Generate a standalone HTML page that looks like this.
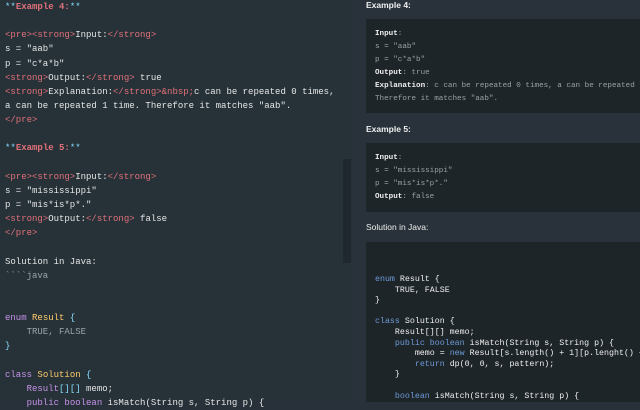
<!DOCTYPE html>
<html><head><meta charset="utf-8"><style>
*{margin:0;padding:0;box-sizing:border-box}
body{width:640px;height:400px;overflow:hidden;background:#283139;position:relative;font-family:"Liberation Mono",monospace}
#L{position:absolute;left:0;top:0;width:352px;height:400px;background:#263238;color:#e6e6e6;font-size:9px;line-height:14.15px;padding:0 0 0 5px;white-space:pre}
#L div{height:14.15px}
.t{color:#e2707a}.a{color:#80cbc4}.h{color:#e2707a;font-weight:bold}.s{color:#89ddff}.k{color:#c792ea}.c{color:#ffcb6b}.g{color:#9aa4ab}
#sb{position:absolute;left:343px;top:159px;width:8px;height:104px;background:#1f282e}
#R{position:absolute;left:352px;top:0;width:288px;height:400px;background:#29323a;color:#dde;font-family:"Liberation Sans",sans-serif}
.lab{position:absolute;left:14px;font-size:8.5px;font-weight:bold;color:#f0f0f0}
.blk{position:absolute;left:14px;right:0;background:#1e2529}
.pre{position:absolute;left:23px;font-size:7.6px;line-height:13px;white-space:pre;color:#9aa0a4;font-family:"Liberation Mono",monospace}
.pre b{color:#eee}
.jv{position:absolute;left:23px;font-size:8.3px;line-height:10.6px;white-space:pre;color:#eeeeee;font-family:"Liberation Mono",monospace}
.jk{color:#6c9ad6}
</style></head><body>
<div id="L"><div><span class="s">**</span><span class="h">Example 4:</span><span class="s">**</span></div><div></div><div><span class="t">&lt;pre&gt;&lt;strong&gt;</span>Input:<span class="t">&lt;/strong&gt;</span></div><div>s = "aab"</div><div>p = "c*a*b"</div><div><span class="t">&lt;strong&gt;</span>Output:<span class="t">&lt;/strong&gt;</span> true</div><div><span class="t">&lt;strong&gt;</span>Explanation:<span class="t">&lt;/strong&gt;&amp;nbsp;</span>c can be repeated 0 times,</div><div>a can be repeated 1 time. Therefore it matches "aab".</div><div><span class="t">&lt;/pre&gt;</span></div><div></div><div><span class="s">**</span><span class="h">Example 5:</span><span class="s">**</span></div><div></div><div><span class="t">&lt;pre&gt;&lt;strong&gt;</span>Input:<span class="t">&lt;/strong&gt;</span></div><div>s = "mississippi"</div><div>p = "mis*is*p*."</div><div><span class="t">&lt;strong&gt;</span>Output:<span class="t">&lt;/strong&gt;</span> false</div><div><span class="t">&lt;/pre&gt;</span></div><div></div><div>Solution in Java:</div><div class="g">&#96;&#96;&#96;&#96;java</div><div></div><div></div><div><span class="k">enum</span> <span class="c">Result</span> <span class="s">{</span></div><div class="g">    TRUE, FALSE</div><div class="s">}</div><div></div><div><span class="k">class</span> <span class="c">Solution</span> <span class="s">{</span></div><div>    <span class="k">Result</span><span class="s">[][]</span> memo;</div><div>    <span class="k">public boolean</span> isMatch(String s, String p) {</div></div>
<div id="sb"></div>
<div id="R">
<div class="lab" style="top:0px">Example 4:</div>
<div class="blk" style="top:19px;height:94px"></div>
<div class="pre" style="top:28px"><b>Input</b>:
s = "aab"
p = "c*a*b"
<b>Output</b>: true
<b>Explanation</b>: c can be repeated 0 times, a can be repeated 1 time.
Therefore it matches "aab".</div>
<div class="lab" style="top:124px">Example 5:</div>
<div class="blk" style="top:143px;height:69px"></div>
<div class="pre" style="top:152px"><b>Input</b>:
s = "mississippi"
p = "mis*is*p*."
<b>Output</b>: false</div>
<div class="lab" style="top:222px;font-weight:normal;font-size:8.5px">Solution in Java:</div>
<div class="blk" style="top:242px;height:160px"></div>
<div class="jv" style="top:275px"><span class="jk">enum</span> Result {
    TRUE, FALSE
}

<span class="jk">class</span> Solution {
    Result[][] memo;
    <span class="jk">public boolean</span> isMatch(String s, String p) {
        memo = <span class="jk">new</span> Result[s.length() + 1][p.lenght() + 1];
        <span class="jk">return</span> dp(0, 0, s, pattern);
    }

    <span class="jk">boolean</span> isMatch(String s, String p) {</div>
</div>
</body></html>
